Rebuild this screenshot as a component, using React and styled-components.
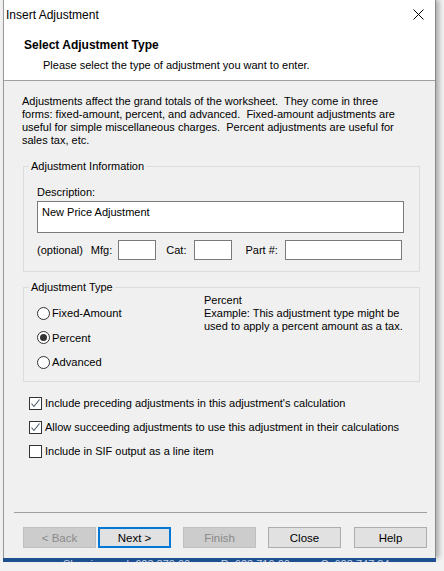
import styled, { createGlobalStyle } from "styled-components";

const GlobalStyle = createGlobalStyle`
  html, body {
    margin: 0;
    padding: 0;
    background: #f2f2f2;
  }
  body {
    font-family: "Liberation Sans", Arial, sans-serif;
    color: #000000;
  }
`;

const Page = styled.div`
  width: 444px;
  height: 571px;
  overflow: hidden;
  padding-left: 3px;
  box-sizing: border-box;
  background: #f2f2f2;
`;

const Window = styled.div`
  width: 433px;
  box-sizing: border-box;
  border-left: 1px solid #9a9a9a;
  border-right: 1px solid #8a8a8a;
  background: #f0f0f0;
  box-shadow: 3px 0 5px rgba(0, 0, 0, 0.3);
  display: flex;
  flex-direction: column;
`;

const TitleBar = styled.div`
  height: 29px;
  background: #ffffff;
  display: flex;
  align-items: center;
  justify-content: space-between;
  padding: 0 11px 0 2px;
  font-size: 12px;
`;

const CloseIcon = styled.svg`
  width: 11px;
  height: 11px;
  margin-top: -1px;
`;

const Header = styled.div`
  background: #ffffff;
  height: 52px;
  border-bottom: 1px solid #a0a0a0;
  padding: 9px 0 0 20px;
  box-sizing: border-box;
`;

const Heading = styled.div`
  font-size: 12px;
  font-weight: bold;
  line-height: 15px;
`;

const Subheading = styled.div`
  font-size: 11px;
  line-height: 14px;
  margin: 5px 0 0 19px;
`;

const Body = styled.div`
  padding: 14px 0 0 0;
  height: 477px;
  box-sizing: border-box;
  font-size: 11px;
  display: flex;
  flex-direction: column;
`;

const Intro = styled.p`
  margin: 0 0 0 18px;
  line-height: 13px;
  width: 380px;
`;

const GroupBox = styled.fieldset`
  margin: ${(p) => p.$top}px 0 0 19px;
  width: 397px;
  height: ${(p) => p.$height}px;
  box-sizing: border-box;
  border: 1px solid #dcdcdc;
  padding: 0 0 0 13px;
  min-width: 0;
`;

const Legend = styled.legend`
  margin-left: -8px;
  padding: 0 2px;
  font-size: 11px;
  line-height: 14px;
`;

const Label = styled.div`
  line-height: 14px;
  margin-top: ${(p) => p.$top || 0}px;
`;

const TextArea = styled.div`
  width: 367px;
  height: 32px;
  box-sizing: border-box;
  border: 1px solid #7a7a7a;
  background: #ffffff;
  padding: 4px 4px;
  margin-top: 2px;
`;

const Row = styled.div`
  display: flex;
  align-items: center;
  margin-top: 7px;
`;

const RowLabel = styled.span`
  margin-left: ${(p) => p.$gap || 0}px;
  margin-right: ${(p) => p.$after || 6}px;
`;

const SmallInput = styled.div`
  width: ${(p) => p.$width}px;
  height: 20px;
  box-sizing: border-box;
  border: 1px solid #7a7a7a;
  background: #ffffff;
`;

const TypeLayout = styled.div`
  display: flex;
`;

const RadioList = styled.div`
  width: 167px;
  display: flex;
  flex-direction: column;
  gap: 10.5px;
  padding-top: 12px;
`;

const RadioRow = styled.div`
  display: flex;
  align-items: center;
  height: 14px;
  font-size: 11.2px;
`;

const RadioCircle = styled.span`
  width: 13px;
  height: 13px;
  box-sizing: border-box;
  border: 1px solid #333333;
  border-radius: 50%;
  background: #ffffff;
  display: flex;
  align-items: center;
  justify-content: center;
  margin-right: 2px;

  &::after {
    content: "";
    width: 7px;
    height: 7px;
    border-radius: 50%;
    background: ${(p) => (p.$checked ? "#333333" : "transparent")};
  }
`;

const TypeInfo = styled.div`
  font-size: 11px;
  line-height: 13px;
`;

const CheckList = styled.div`
  display: flex;
  flex-direction: column;
  gap: 10px;
  margin: 14px 0 0 25px;
`;

const CheckRow = styled.div`
  display: flex;
  align-items: center;
  height: 14px;
  font-size: 11px;
`;

const CheckBox = styled.span`
  width: 13px;
  height: 13px;
  box-sizing: border-box;
  border: 1px solid #333333;
  background: #ffffff;
  display: flex;
  align-items: center;
  justify-content: center;
  margin-right: 3px;
`;

const Footer = styled.div`
  margin: auto 8px 0 10px;
  border-top: 1px solid #a0a0a0;
  padding: 14px 0 10px 9px;
  display: flex;
`;

const Button = styled.div`
  width: 73px;
  height: 21px;
  box-sizing: border-box;
  margin-left: ${(p) => p.$gap || 0}px;
  display: flex;
  align-items: center;
  justify-content: center;
  font-size: 11.5px;
  background: ${(p) => (p.$disabled ? "#cccccc" : "#e1e1e1")};
  color: ${(p) => (p.$disabled ? "#8a8a8a" : "#000000")};
  border: ${(p) =>
    p.$default ? "2px solid #0078d7" : p.$disabled ? "1px solid #bfbfbf" : "1px solid #adadad"};
`;

const BackStrip = styled.div`
  width: 433px;
  height: 4px;
  overflow: hidden;
  background: #1d4f91;
  color: #c8d4e6;
  font-size: 11px;
  line-height: 12px;
  padding-left: 60px;
  box-sizing: border-box;
  white-space: pre;
`;

const radios = [
  { label: "Fixed-Amount", checked: false },
  { label: "Percent", checked: true },
  { label: "Advanced", checked: false },
];

const checks = [
  { label: "Include preceding adjustments in this adjustment's calculation", checked: true },
  { label: "Allow succeeding adjustments to use this adjustment in their calculations", checked: true },
  { label: "Include in SIF output as a line item", checked: false },
];

export default function App() {
  return (
    <>
      <GlobalStyle />
      <Page>
        <Window>
          <TitleBar>
            <span>Insert Adjustment</span>
            <CloseIcon viewBox="0 0 11 11">
              <path d="M0.5 0.5 L10.5 10.5 M10.5 0.5 L0.5 10.5" stroke="#000" strokeWidth="1" />
            </CloseIcon>
          </TitleBar>
          <Header>
            <Heading>Select Adjustment Type</Heading>
            <Subheading>Please select the type of adjustment you want to enter.</Subheading>
          </Header>
          <Body>
            <Intro>
              Adjustments affect the grand totals of the worksheet.&nbsp; They come in three
              forms: fixed-amount, percent, and advanced.&nbsp; Fixed-amount adjustments are
              useful for simple miscellaneous charges.&nbsp; Percent adjustments are useful for
              sales tax, etc.
            </Intro>

            <GroupBox $top={12} $height={113}>
              <Legend>Adjustment Information</Legend>
              <Label $top={12}>Description:</Label>
              <TextArea>New Price Adjustment</TextArea>
              <Row>
                <RowLabel $after={8}>(optional)</RowLabel>
                <RowLabel>Mfg:</RowLabel>
                <SmallInput $width={38} />
                <RowLabel $gap={10} $after={8}>Cat:</RowLabel>
                <SmallInput $width={38} />
                <RowLabel $gap={13} $after={7}>Part #:</RowLabel>
                <SmallInput $width={117} />
              </Row>
            </GroupBox>

            <GroupBox $top={8} $height={102}>
              <Legend>Adjustment Type</Legend>
              <TypeLayout>
                <RadioList>
                  {radios.map((r) => (
                    <RadioRow key={r.label}>
                      <RadioCircle $checked={r.checked} />
                      {r.label}
                    </RadioRow>
                  ))}
                </RadioList>
                <TypeInfo>
                  Percent
                  <br />
                  Example: This adjustment type might be
                  <br />
                  used to apply a percent amount as a tax.
                </TypeInfo>
              </TypeLayout>
            </GroupBox>

            <CheckList>
              {checks.map((c) => (
                <CheckRow key={c.label}>
                  <CheckBox>
                    {c.checked && (
                      <svg width="11" height="11" viewBox="0 0 11 11">
                        <path d="M1.5 5.5 L4 8.5 L9.5 1.5" fill="none" stroke="#4a5a6a" strokeWidth="1.1" />
                      </svg>
                    )}
                  </CheckBox>
                  {c.label}
                </CheckRow>
              ))}
            </CheckList>

            <Footer>
              <Button $disabled>&lt; Back</Button>
              <Button $default $gap={2}>Next &gt;</Button>
              <Button $disabled $gap={12}>Finish</Button>
              <Button $gap={12}>Close</Button>
              <Button $gap={13}>Help</Button>
            </Footer>
          </Body>
        </Window>
        <BackStrip>{"Showing       l: 623,870.00          R: 623,719.00          C: 623,747.84"}</BackStrip>
      </Page>
    </>
  );
}
